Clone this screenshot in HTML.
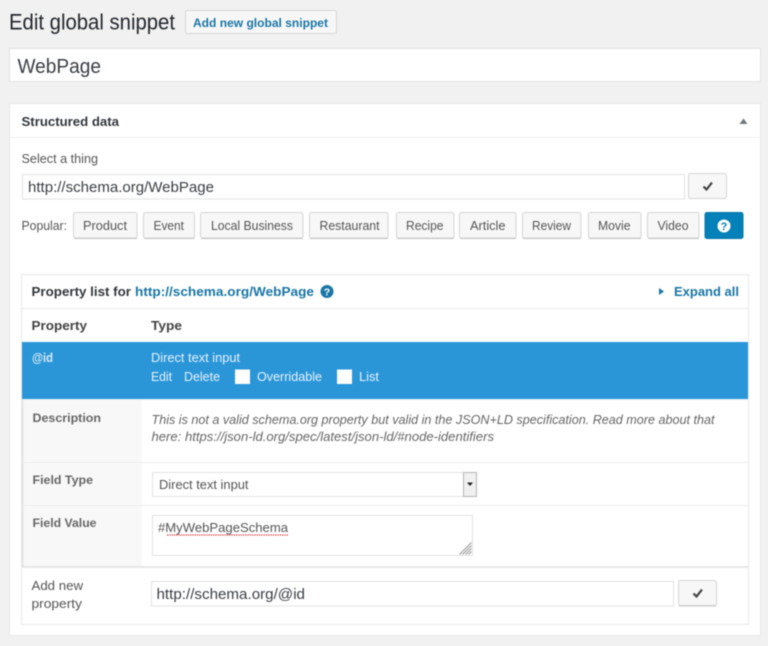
<!DOCTYPE html>
<html><head><meta charset="utf-8">
<style>
html,body{margin:0;padding:0;background:#f1f1f1;width:768px;height:646px;overflow:hidden}
svg{display:block;filter:blur(.45px)}
text{font-family:"Liberation Sans",sans-serif;white-space:pre}
.b{font-weight:bold}
.btn{fill:#f7f7f7;stroke:#d6d6d6}
.t{font-size:12.5px;fill:#555}
</style></head><body>
<svg width="768" height="646" viewBox="0 0 768 646" xmlns="http://www.w3.org/2000/svg">
<rect width="768" height="646" fill="#f1f1f1"/>
<text x="9" y="29.500" font-size="22" fill="#23282d" textLength="166" lengthAdjust="spacingAndGlyphs">Edit global snippet</text>
<rect x="185.500" y="10.500" width="151" height="23" rx="2" fill="#f7f7f7" stroke="#d6d6d6"/>
<text x="193" y="27" class="b" font-size="12" fill="#1a76a5" textLength="135" lengthAdjust="spacingAndGlyphs">Add new global snippet</text>

<rect x="9.500" y="48.500" width="751" height="33" fill="#fff" stroke="#e2e2e2"/>
<text x="17.500" y="73" font-size="20" fill="#3a3f44" textLength="83.500" lengthAdjust="spacingAndGlyphs">WebPage</text>

<rect x="9.500" y="103.500" width="751" height="532" fill="#fff" stroke="#e8e8e8"/>
<line x1="10" x2="760" y1="137.500" y2="137.500" stroke="#f0f0f0"/>
<text x="21.500" y="126" class="b" font-size="13" fill="#32373c" textLength="97.500" lengthAdjust="spacingAndGlyphs">Structured data</text>
<path d="M739.500 124L743.500 118.500L747.500 124Z" fill="#72777c"/>

<text x="21.500" y="163" font-size="13" fill="#555" textLength="76.500" lengthAdjust="spacingAndGlyphs">Select a thing</text>
<rect x="22.500" y="174.500" width="662" height="24.500" fill="#fff" stroke="#e2e2e2"/>
<text x="28" y="192" font-size="15" fill="#3a3f44" textLength="186" lengthAdjust="spacingAndGlyphs">http://schema.org/WebPage</text>
<line x1="689" x2="726" y1="198.500" y2="198.500" stroke="#bdbdbd"/>
<rect x="688.500" y="173.500" width="38" height="25" rx="2" class="btn"/>
<path d="M703.500 186.500L706.500 189.500L712 182.500" fill="none" stroke="#444" stroke-width="2.200"/>

<text x="21.500" y="230" font-size="13" fill="#555" textLength="45.500" lengthAdjust="spacingAndGlyphs">Popular:</text>
<g>
<rect x="73.500" y="212.500" width="63.500" height="25.500" rx="2" class="btn"/>
<rect x="143.500" y="212.500" width="51" height="25.500" rx="2" class="btn"/>
<rect x="200.500" y="212.500" width="102.500" height="25.500" rx="2" class="btn"/>
<rect x="309.500" y="212.500" width="78.500" height="25.500" rx="2" class="btn"/>
<rect x="396.500" y="212.500" width="57.500" height="25.500" rx="2" class="btn"/>
<rect x="459.500" y="212.500" width="56.500" height="25.500" rx="2" class="btn"/>
<rect x="522.500" y="212.500" width="58.500" height="25.500" rx="2" class="btn"/>
<rect x="588.500" y="212.500" width="52.500" height="25.500" rx="2" class="btn"/>
<rect x="647.500" y="212.500" width="51.500" height="25.500" rx="2" class="btn"/>
</g>
<path d="M74 238.500H137M144 238.500H194.500M201 238.500H303M310 238.500H388M397 238.500H454M460 238.500H516M523 238.500H581M589 238.500H641M648 238.500H699" stroke="#c4c4c4" fill="none"/>
<text x="83" y="230" class="t" textLength="44" lengthAdjust="spacingAndGlyphs">Product</text>
<text x="153.500" y="230" class="t" textLength="30.500" lengthAdjust="spacingAndGlyphs">Event</text>
<text x="211" y="230" class="t" textLength="82" lengthAdjust="spacingAndGlyphs">Local Business</text>
<text x="319.500" y="230" class="t" textLength="60" lengthAdjust="spacingAndGlyphs">Restaurant</text>
<text x="406" y="230" class="t" textLength="37.500" lengthAdjust="spacingAndGlyphs">Recipe</text>
<text x="470" y="230" class="t" textLength="35.500" lengthAdjust="spacingAndGlyphs">Article</text>
<text x="532" y="230" class="t" textLength="39" lengthAdjust="spacingAndGlyphs">Review</text>
<text x="598" y="230" class="t" textLength="32.500" lengthAdjust="spacingAndGlyphs">Movie</text>
<text x="657.500" y="230" class="t" textLength="31" lengthAdjust="spacingAndGlyphs">Video</text>
<rect x="705" y="212.500" width="38" height="26" rx="2" fill="#0481b8" stroke="#0473a6"/>
<circle cx="724" cy="226" r="6.500" fill="#fff"/>
<text x="724" y="230" text-anchor="middle" class="b" font-size="11" fill="#0481b8">?</text>

<rect x="21.500" y="274.500" width="727" height="350" fill="#fff" stroke="#e8e8e8"/>
<line x1="22" x2="748" y1="308.500" y2="308.500" stroke="#e8e8e8"/>
<text x="31.500" y="296" class="b" font-size="13" fill="#32373c" textLength="99.500" lengthAdjust="spacingAndGlyphs">Property list for</text>
<text x="135" y="296" class="b" font-size="13" fill="#1a76a5" textLength="179" lengthAdjust="spacingAndGlyphs">http://schema.org/WebPage</text>
<circle cx="327" cy="291.500" r="6.500" fill="#1a76a5"/>
<text x="327" y="295.500" text-anchor="middle" class="b" font-size="10.500" fill="#fff">?</text>
<path d="M659 288L664 291.500L659 295Z" fill="#1a76a5"/>
<text x="674" y="296" class="b" font-size="13" fill="#1a76a5" textLength="65" lengthAdjust="spacingAndGlyphs">Expand all</text>
<text x="31.500" y="330" class="b" font-size="13" fill="#444" textLength="55.500" lengthAdjust="spacingAndGlyphs">Property</text>
<text x="151" y="330" class="b" font-size="13" fill="#444" textLength="31" lengthAdjust="spacingAndGlyphs">Type</text>

<rect x="22" y="342" width="726" height="57" fill="#2a96d8"/>
<text x="32" y="362" class="b" font-size="12.500" fill="#d6e9f6" textLength="21" lengthAdjust="spacingAndGlyphs">@id</text>
<text x="151" y="362" font-size="12.500" fill="#e6f2fa" textLength="89" lengthAdjust="spacingAndGlyphs">Direct text input</text>
<text x="151" y="381" font-size="12.500" fill="#e6f2fa" textLength="21" lengthAdjust="spacingAndGlyphs">Edit</text>
<text x="184" y="381" font-size="12.500" fill="#e6f2fa" textLength="36" lengthAdjust="spacingAndGlyphs">Delete</text>
<rect x="235" y="369.500" width="15" height="14.500" fill="#fff"/>
<text x="257" y="381" font-size="12.500" fill="#e6f2fa" textLength="65" lengthAdjust="spacingAndGlyphs">Overridable</text>
<rect x="337" y="369.500" width="15" height="14.500" fill="#fff"/>
<text x="359" y="381" font-size="12.500" fill="#e6f2fa" textLength="20" lengthAdjust="spacingAndGlyphs">List</text>

<rect x="22" y="399" width="120" height="168" fill="#f8f8f8"/>
<rect x="22" y="399" width="1.500" height="168" fill="#e4e4e4"/>
<line x1="22" x2="748" y1="399.500" y2="399.500" stroke="#edf1f4"/>
<line x1="22" x2="748" y1="462.500" y2="462.500" stroke="#ececec"/>
<line x1="22" x2="748" y1="505.500" y2="505.500" stroke="#ececec"/>
<line x1="22" x2="748" y1="567" y2="567" stroke="#e2e2e2" stroke-width="1.500"/>

<text x="32.500" y="422" class="b" font-size="12" fill="#666" textLength="68.500" lengthAdjust="spacingAndGlyphs">Description</text>
<text x="151.500" y="424" font-size="12.500" font-style="italic" fill="#666" textLength="563" lengthAdjust="spacingAndGlyphs">This is not a valid schema.org property but valid in the JSON+LD specification. Read more about that</text>
<text x="151.500" y="441" font-size="12.500" font-style="italic" fill="#666" textLength="342.500" lengthAdjust="spacingAndGlyphs">here: https://json-ld.org/spec/latest/json-ld/#node-identifiers</text>

<text x="32.500" y="484" class="b" font-size="12" fill="#666" textLength="60.500" lengthAdjust="spacingAndGlyphs">Field Type</text>
<rect x="152.500" y="472.500" width="324" height="24" fill="#fff" stroke="#e2e2e2"/>
<text x="159" y="489" font-size="12.500" fill="#555" textLength="89.500" lengthAdjust="spacingAndGlyphs">Direct text input</text>
<rect x="463.500" y="472.500" width="13" height="24" fill="#f0f0f0" stroke="#b5b5b5"/>
<path d="M467 482.500H473L470 486Z" fill="#222"/>

<text x="32.500" y="527" class="b" font-size="12" fill="#666" textLength="64" lengthAdjust="spacingAndGlyphs">Field Value</text>
<rect x="152.500" y="515.500" width="320" height="40" fill="#fff" stroke="#e2e2e2"/>
<text x="158" y="532" font-size="12.500" fill="#555" textLength="130" lengthAdjust="spacingAndGlyphs">#MyWebPageSchema</text>
<line x1="167" x2="288" y1="535" y2="535" stroke="#d0393b" stroke-width="1.200" stroke-dasharray="1.300 1"/>
<path d="M459.500 554.500L471.500 542.500M462.500 554.500L471.500 545.500M465.500 554.500L471.500 548.500M468.500 554.500L471.500 551.500" stroke="#999" fill="none"/>

<text x="31.500" y="590" font-size="13" fill="#555" textLength="51.500" lengthAdjust="spacingAndGlyphs">Add new</text>
<text x="31.500" y="608" font-size="13" fill="#555" textLength="50.500" lengthAdjust="spacingAndGlyphs">property</text>
<rect x="151.500" y="581.500" width="522" height="24.500" fill="#fff" stroke="#e2e2e2"/>
<text x="156.500" y="599" font-size="15" fill="#3a3f44" textLength="148.500" lengthAdjust="spacingAndGlyphs">http://schema.org/@id</text>
<line x1="679" x2="716" y1="606" y2="606" stroke="#bdbdbd"/>
<rect x="678.500" y="580.500" width="38" height="25" rx="2" class="btn"/>
<path d="M693.500 593.500L696.500 596.500L702 589.500" fill="none" stroke="#444" stroke-width="2.200"/>
</svg>
</body></html>
